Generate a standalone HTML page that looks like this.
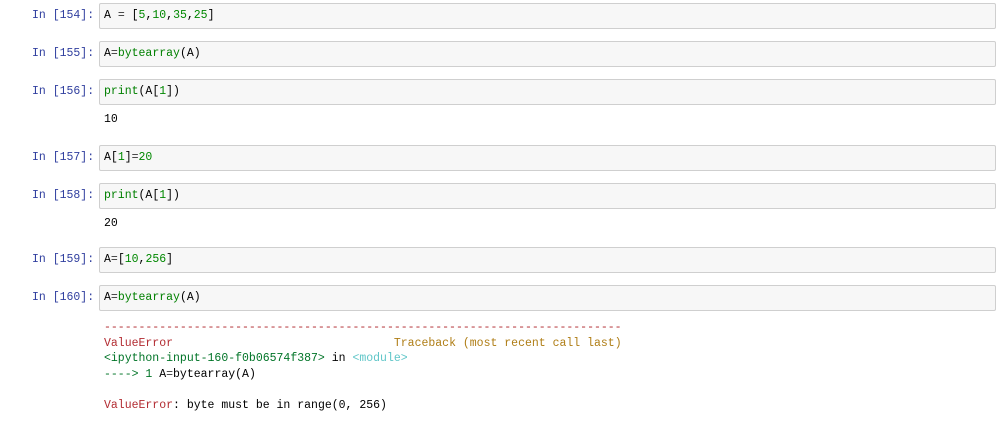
<!DOCTYPE html><html><head><style>
body{margin:0;background:#fff;width:999px;height:433px;overflow:hidden;font-family:"Liberation Mono",monospace;font-size:11.5px;}
.p{position:absolute;left:32px;color:#303f9f;line-height:15px;}
.b{position:absolute;left:99px;width:897px;height:26px;background:#f7f7f7;border:1px solid #cfcfcf;border-radius:2px;box-sizing:border-box;}
.t{position:absolute;left:104px;line-height:15.6px;white-space:pre;color:#000;}
.g{color:#008000}.n{color:#080}.r{color:#b22b31}.y{color:#af7d15}.c{color:#60c6c8}.dg{color:#007427}.o{color:#333}
</style></head><body>
<div class="b" style="top:3px"></div><div class="p" style="top:8px">In [154]:</div><div class="t" style="top:8px">A <span class="o">=</span> [<span class="n">5</span>,<span class="n">10</span>,<span class="n">35</span>,<span class="n">25</span>]</div>
<div class="b" style="top:41px"></div><div class="p" style="top:46px">In [155]:</div><div class="t" style="top:46px">A<span class="o">=</span><span class="g">bytearray</span>(A)</div>
<div class="b" style="top:79px"></div><div class="p" style="top:84px">In [156]:</div><div class="t" style="top:84px"><span class="g">print</span>(A[<span class="n">1</span>])</div>
<div class="t" style="top:112px">10</div>
<div class="b" style="top:145px"></div><div class="p" style="top:150px">In [157]:</div><div class="t" style="top:150px">A[<span class="n">1</span>]<span class="o">=</span><span class="n">20</span></div>
<div class="b" style="top:183px"></div><div class="p" style="top:188px">In [158]:</div><div class="t" style="top:188px"><span class="g">print</span>(A[<span class="n">1</span>])</div>
<div class="t" style="top:216px">20</div>
<div class="b" style="top:247px"></div><div class="p" style="top:252px">In [159]:</div><div class="t" style="top:252px">A<span class="o">=</span>[<span class="n">10</span>,<span class="n">256</span>]</div>
<div class="b" style="top:285px"></div><div class="p" style="top:290px">In [160]:</div><div class="t" style="top:290px">A<span class="o">=</span><span class="g">bytearray</span>(A)</div>
<div class="t" style="top:320px"><span class="r">---------------------------------------------------------------------------</span>
<span class="r">ValueError</span>                                <span class="y">Traceback (most recent call last)</span>
<span class="dg">&lt;ipython-input-160-f0b06574f387&gt;</span> in <span class="c">&lt;module&gt;</span>
<span class="dg">----&gt; 1</span> A<span class="o">=</span>bytearray(A)

<span class="r">ValueError</span>: byte must be in range(0, 256)</div>
</body></html>
